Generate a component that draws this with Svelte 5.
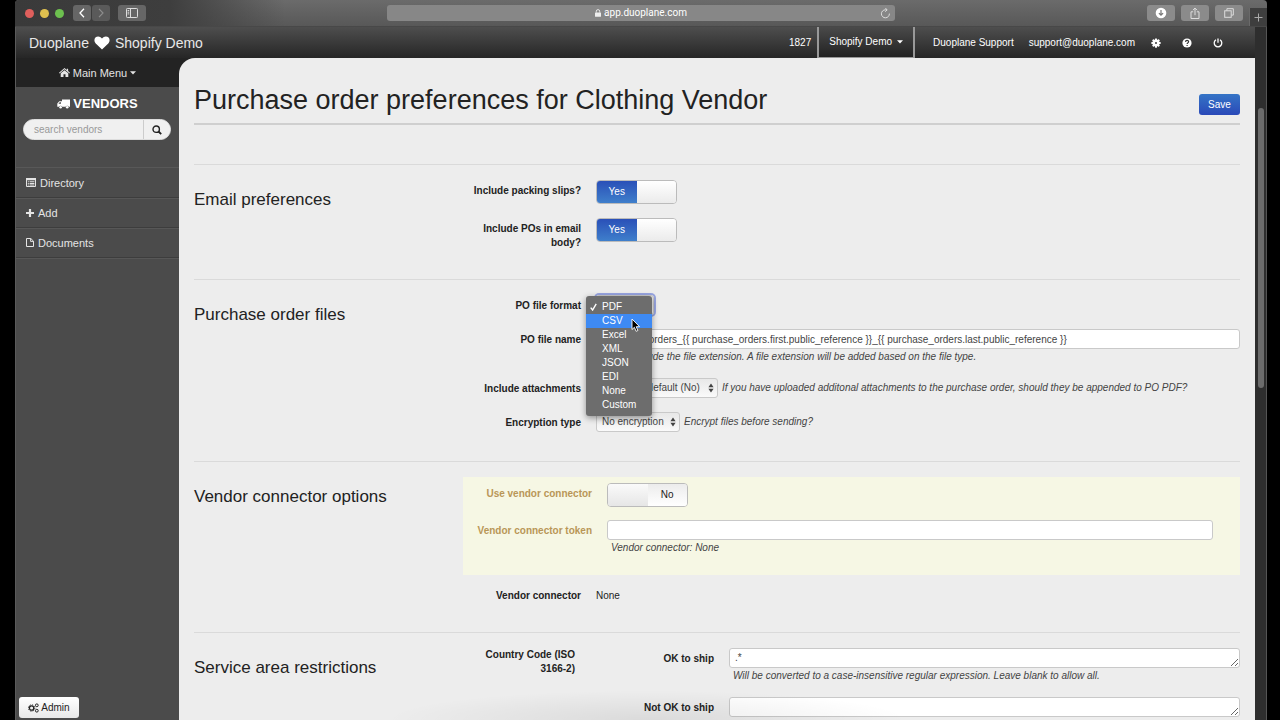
<script>
  let packing = $state(true);
  let poBody = $state(true);
  let connector = $state(false);
  let format = $state('PDF');
  let hovered = $state('CSV');
  let okToShip = $state('.*');
  const formats = ['PDF', 'CSV', 'Excel', 'XML', 'JSON', 'EDI', 'None', 'Custom'];
  const gearTeeth = [0, 45, 90, 135, 180, 225, 270, 315];
</script>

{#snippet gear(size, hole)}
  <svg width={size} height={size} viewBox="0 0 16 16" aria-hidden="true">
    <g fill="currentColor">
      {#each gearTeeth as a}
        <rect x="6.4" y="0.6" width="3.2" height="4" rx="0.6" transform="rotate({a} 8 8)" />
      {/each}
    </g>
    <circle cx="8" cy="8" r={(5.6 + hole) / 2} fill="none" stroke="currentColor" stroke-width={5.6 - hole} />
  </svg>
{/snippet}

{#snippet arrows()}
  <svg class="arrows" width="6" height="10" viewBox="0 0 6 10" aria-hidden="true">
    <path d="M3 0.6 5.6 4.2H0.4zM3 9.4 0.4 5.8H5.6z" fill="#444" />
  </svg>
{/snippet}

{#snippet caret()}
  <svg width="6" height="4" viewBox="0 0 6 4" aria-hidden="true"><path d="M0 0.3h6L3 3.6z" fill="currentColor" /></svg>
{/snippet}

<div class="window">
  <header class="toolbar">
    <div class="tools left">
      <span class="light red"></span><span class="light yellow"></span><span class="light green"></span>
      <button class="tool back" aria-label="Back"><svg width="8" height="12" viewBox="0 0 8 12"><path d="M6 1.8 2 6l4 4.2" fill="none" stroke="#fff" stroke-width="1.3" /></svg></button>
      <button class="tool forward" aria-label="Forward"><svg width="8" height="12" viewBox="0 0 8 12"><path d="M2 1.8 6 6l-4 4.2" fill="none" stroke="#8c8c8c" stroke-width="1.2" /></svg></button>
      <button class="tool panel" aria-label="Show sidebar"><svg width="12" height="10" viewBox="0 0 12 10" fill="none" stroke="#ddd"><rect x="0.5" y="0.5" width="11" height="9" rx="0.8" /><path d="M4.5 0.5v9M1.6 2.5h1.6M1.6 4.2h1.6M1.6 5.9h1.6" /></svg></button>
    </div>
    <div class="address">
      <svg width="6" height="8" viewBox="0 0 6 8" aria-hidden="true"><rect y="3.4" width="6" height="4.4" rx="0.5" fill="#eee" /><path d="M1.3 3.6V2.3a1.7 1.7 0 0 1 3.4 0v1.3" fill="none" stroke="#eee" stroke-width="0.9" /></svg>
      <span>app.duoplane.com</span>
      <button class="reload" aria-label="Reload"><svg width="11" height="11" viewBox="0 0 11 11" fill="none" stroke="#ddd"><path d="M9.4 5.6A4 4 0 1 1 5.4 1.8h1.4M5.2 0l2 1.8-2 1.9" /></svg></button>
    </div>
    <div class="tools right">
      <button class="tool" aria-label="Downloads"><svg width="12" height="12" viewBox="0 0 12 12"><circle cx="6" cy="6" r="5.3" fill="#fff" /><path d="M6 3v5M3.9 6.1 6 8.2l2.1-2.1" fill="none" stroke="#777" stroke-width="1.2" /></svg></button>
      <button class="tool" aria-label="Share"><svg width="10" height="13" viewBox="0 0 10 13" fill="none" stroke="#ddd"><path d="M3.2 4.8H1v6.7h8V4.8H6.8M5 8.2V1.2M2.9 3.2 5 1.1l2.1 2.1" /></svg></button>
      <button class="tool" aria-label="Tabs"><svg width="10" height="10" viewBox="0 0 10 10" fill="none" stroke="#ddd"><rect x="0.7" y="2.8" width="6.5" height="6.5" /><path d="M2.9 2.6V0.7h6.4v6.4H7.4" /></svg></button>
      <button class="newtab" aria-label="New tab"><svg width="9" height="9" viewBox="0 0 9 9"><path d="M4.5 0.5v8M0.5 4.5h8" stroke="#aaa" /></svg></button>
    </div>
  </header>

  <div class="viewport">
    <div class="page">
      <div class="topbar">
        <a class="brand" href="#home">
          Duoplane
          <svg width="16" height="14" viewBox="0 0 16 14" aria-hidden="true"><path d="M8 13.6 1.5 7.2C0 5.6.1 3 1.4 1.6 3.2-.1 6.2.1 8 2.6 9.8.1 12.8-.1 14.6 1.6 15.9 3 16 5.6 14.5 7.2z" fill="#fff" /></svg>
          Shopify Demo
        </a>
        <nav class="topnav">
          <span class="count">1827</span>
          <button class="account">Shopify Demo {@render caret()}</button>
          <div class="contact">
            <a href="#support">Duoplane Support</a>
            <a href="#mail">support@duoplane.com</a>
          </div>
          <div class="icons">
            <a href="#settings" aria-label="Settings">{@render gear(10, 1.6)}</a>
            <a href="#help" aria-label="Help"><svg width="10" height="10" viewBox="0 0 10 10"><circle cx="5" cy="5" r="4.6" fill="#fff" /><path d="M3.5 3.9C3.6 1.9 6.6 1.9 6.6 3.8 6.6 4.9 5.1 4.9 5.1 6.1M5.1 6.9v1.2" fill="none" stroke="#333" stroke-width="1.2" /></svg></a>
            <a href="#logout" aria-label="Log out"><svg width="10" height="10" viewBox="0 0 10 10" fill="none" stroke="#fff" stroke-width="1.3"><path d="M3 1.8a3.8 3.8 0 1 0 4 0M5 0.4v4.4" /></svg></a>
          </div>
        </nav>
      </div>

      <div class="body">
        <aside class="sidebar">
          <button class="mainmenu">
            <svg width="11" height="9" viewBox="0 0 11 9" aria-hidden="true"><path d="M5.5 0 7.8 2V.8h1.3v2.3L11 4.7l-.6.7L5.5 1.3.6 5.4 0 4.7z" fill="currentColor" /><path d="M5.5 2.2 9.3 5.3V9H6.5V6.2h-2V9H1.7V5.3z" fill="currentColor" /></svg>
            Main Menu {@render caret()}
          </button>
          <h2 class="vendors">
            <svg width="13" height="10" viewBox="0 0 13 10" aria-hidden="true"><path d="M5 .5h8v7.3h-1.2a1.7 1.7 0 0 0-3.2 0H5.2a1.7 1.7 0 0 0-3.2 0H.3V4.6L2.3 2.2H5zM1.4 4.7H4V3.2H2.7z" fill="#fff" fill-rule="evenodd" /><circle cx="3.6" cy="8.3" r="1.3" fill="#fff" /><circle cx="10.2" cy="8.3" r="1.3" fill="#fff" /></svg>
            VENDORS
          </h2>
          <form class="search">
            <input type="text" placeholder="search vendors" aria-label="Search vendors" />
            <button type="button" aria-label="Search"><svg width="10" height="10" viewBox="0 0 10 10" fill="none" stroke="#222"><circle cx="4.2" cy="4.2" r="3.2" stroke-width="1.4" /><path d="M6.5 6.5 9.2 9.2" stroke-width="1.8" /></svg></button>
          </form>
          <ul class="links">
            <li><a href="#directory"><svg width="10" height="9" viewBox="0 0 10 9" aria-hidden="true"><path d="M.5.5h9v8h-9z" fill="none" stroke="currentColor" /><path d="M0 0h10v2.3H0zM1.8 3.3h1v1h-1zM3.6 3.3h4.8v1H3.6zM1.8 5h1v1h-1zM3.6 5h4.8v1H3.6zM1.8 6.6h1v.8h-1zM3.6 6.6h4.8v.8H3.6z" fill="currentColor" /></svg>Directory</a></li>
            <li><a href="#add"><svg width="8" height="8" viewBox="0 0 8 8" aria-hidden="true"><path d="M2.9 0h2.2v2.9H8v2.2H5.1V8H2.9V5.1H0V2.9h2.9z" fill="currentColor" /></svg>Add</a></li>
            <li><a href="#documents"><svg width="8" height="9" viewBox="0 0 8 9" fill="none" stroke="currentColor" aria-hidden="true"><path d="M.5.5h4.3l2.7 2.7v5.3h-7zM4.6.5v2.9h2.9" /></svg>Documents</a></li>
          </ul>
          <button class="admin">
            <svg width="11" height="10" viewBox="0 0 11 10" fill="none" stroke="#222" aria-hidden="true"><circle cx="3.6" cy="5" r="2.2" stroke-width="1.3" /><circle cx="3.6" cy="5" r="3.2" stroke-width="0.9" stroke-dasharray="1.3 1.21" /><circle cx="8.8" cy="2.3" r="1.4" /><circle cx="8.8" cy="7.7" r="1.4" /></svg>
            Admin
          </button>
        </aside>

        <main>
          <div class="title">
            <h1>Purchase order preferences for Clothing Vendor</h1>
            <button class="save">Save</button>
          </div>

          <section>
            <h3>Email preferences</h3>
            <div class="fields">
              <div class="row">
                <label for="packing">Include packing slips?</label>
                <div class="control"><span class="switch" class:on={packing}><input id="packing" type="checkbox" bind:checked={packing} /><b>{packing ? 'Yes' : ''}</b><i>{packing ? '' : 'No'}</i></span></div>
              </div>
              <div class="row">
                <label for="pobody">Include POs in email body?</label>
                <div class="control"><span class="switch" class:on={poBody}><input id="pobody" type="checkbox" bind:checked={poBody} /><b>{poBody ? 'Yes' : ''}</b><i>{poBody ? '' : 'No'}</i></span></div>
              </div>
            </div>
          </section>

          <section>
            <h3>Purchase order files</h3>
            <div class="fields">
              <div class="row">
                <label for="format">PO file format</label>
                <div class="control inline">
                  <span class="select focus">
                    <select id="format" class="short" bind:value={format}>{#each formats as f}<option>{f}</option>{/each}</select>{@render arrows()}
                    <ul class="menu" role="listbox" aria-label="PO file format">
                      {#each formats as f}
                        <li role="option" aria-selected={f === format} class:hot={f === hovered} onmouseenter={() => (hovered = f)}>
                          <span class="tick">{#if f === format}<svg width="7" height="8" viewBox="0 0 7 8" aria-hidden="true"><path d="M.7 4.6 2.6 7 6.2.8" fill="none" stroke="#fff" stroke-width="1.4" /></svg>{/if}</span>{f}
                        </li>
                      {/each}
                    </ul>
                    <svg class="pointer" width="10" height="15" viewBox="0 0 10 15" aria-hidden="true"><path d="M1 1v10.5l2.4-2.2 1.7 4 1.8-.8-1.7-3.8H8.6z" fill="#000" stroke="#fff" stroke-width="0.9" /></svg>
                  </span>
                </div>
              </div>
              <div class="row">
                <label for="filename">PO file name</label>
                <div class="control">
                  <input id="filename" class="text" type="text" value={'purchase_orders_{{ purchase_orders.first.public_reference }}_{{ purchase_orders.last.public_reference }}'} />
                  <p class="help">Do not include the file extension. A file extension will be added based on the file type.</p>
                </div>
              </div>
              <div class="row">
                <label for="attach">Include attachments</label>
                <div class="control inline">
                  <span class="select"><select id="attach" class="long"><option>Company default (No)</option></select>{@render arrows()}</span>
                  <p class="help">If you have uploaded additonal attachments to the purchase order, should they be appended to PO PDF?</p>
                </div>
              </div>
              <div class="row">
                <label for="encrypt">Encryption type</label>
                <div class="control inline">
                  <span class="select"><select id="encrypt" class="medium"><option>No encryption</option></select>{@render arrows()}</span>
                  <p class="help">Encrypt files before sending?</p>
                </div>
              </div>
            </div>
          </section>

          <section>
            <h3>Vendor connector options</h3>
            <div class="fields">
              <div class="notice">
                <div class="row">
                  <label for="useconn">Use vendor connector</label>
                  <div class="control"><span class="switch" class:on={connector}><input id="useconn" type="checkbox" bind:checked={connector} /><b>{connector ? 'Yes' : ''}</b><i>{connector ? '' : 'No'}</i></span></div>
                </div>
                <div class="row">
                  <label for="token">Vendor connector token</label>
                  <div class="control">
                    <input id="token" class="text" type="text" />
                    <p class="help">Vendor connector: None</p>
                  </div>
                </div>
              </div>
              <div class="row plain">
                <span class="label">Vendor connector</span>
                <div class="control">None</div>
              </div>
            </div>
          </section>

          <section>
            <h3>Service area restrictions</h3>
            <div class="fields country">
              <span class="label">Country Code (ISO 3166-2)</span>
              <div class="rules">
                <div class="row">
                  <label for="ok">OK to ship</label>
                  <div class="control">
                    <textarea id="ok" class="text" rows="1" bind:value={okToShip}></textarea>
                    <p class="help">Will be converted to a case-insensitive regular expression. Leave blank to allow all.</p>
                  </div>
                </div>
                <div class="row">
                  <label for="notok">Not OK to ship</label>
                  <div class="control">
                    <textarea id="notok" class="text" rows="1"></textarea>
                    <p class="help">Will be converted to a case-insensitive regular expression. Leave blank to allow all.</p>
                  </div>
                </div>
              </div>
            </div>
          </section>
        </main>
      </div>
    </div>
    <div class="scrollbar"><div class="thumb"></div></div>
  </div>
</div>

<style>
  :global(body) { margin: 0; background: #000; }
  * { box-sizing: border-box; }
  .window {
    height: 100vh; margin: 0 13px 0 15px; display: flex; flex-direction: column; overflow: hidden;
    font: 10px/14px "Liberation Sans", Arial, sans-serif; color: #222;
    border-radius: 4px 4px 0 0;
  }
  button, input, select, textarea { font: inherit; color: inherit; margin: 0; }
  button { border: 0; padding: 0; background: none; display: inline-flex; align-items: center; justify-content: center; }
  a { color: inherit; text-decoration: none; }
  svg { display: block; flex: none; }
  ul { list-style: none; margin: 0; padding: 0; }
  h1, h2, h3, p { margin: 0; font-weight: 400; }

  .toolbar {
    flex: none; height: 27px; display: grid; grid-template-columns: 372fr 508fr 372fr; align-items: center;
    background: linear-gradient(90deg, #3a3a3a 0, #3e3e3e 155px, transparent 270px), linear-gradient(#6b6b6b, #585858);
    border-bottom: 1px solid #484848;
  }
  .tools { display: flex; align-items: center; height: 26px; }
  .left { padding-left: 10px; }
  .light { width: 9px; height: 9px; border-radius: 50%; margin-right: 6px; }
  .red { background: #df5f5c; }
  .yellow { background: #dfc04f; }
  .green { background: #6dc04f; }
  .tool { width: 28px; height: 16px; border-radius: 3px; background: #8b8b8b; }
  .left .tool { background: #666; }
  .left .back { width: 18px; margin: 0 1px 0 3px; }
  .left .forward { width: 18px; background: #5a5a5a; margin-right: 8px; }
  .address {
    height: 16px; border-radius: 3px; background: #878787; color: #fff; font-family: Roboto, sans-serif;
    display: flex; align-items: center; justify-content: center; gap: 3px; position: relative;
  }
  .reload { position: absolute; right: 4px; top: 3px; }
  .right { justify-content: flex-end; gap: 6px; }
  .newtab { width: 18px; height: 18px; align-self: flex-end; background: #3e3e3e; border-left: 1px solid #6a6a6a; }

  .viewport { flex: 1; min-height: 0; display: flex; }
  .page { flex: 1; min-width: 0; display: flex; flex-direction: column; background: #4b4b4b; border-left: 1px solid #5a5a5a; }
  .scrollbar { width: 12px; background: #2e2e2e; border-right: 1px solid #555; padding: 81px 2px 0 3px; }
  .thumb { height: 280px; border-radius: 4px; background: #6c6c6c; }

  .topbar {
    flex: none; height: 31px; padding-left: 13px; display: flex; justify-content: space-between; align-items: stretch;
    background: linear-gradient(#4e4e4e, #262626); color: #fff;
  }
  .brand { display: flex; align-items: center; gap: 5px; font-size: 14px; color: #e8e8e8; }
  .topnav { display: flex; align-items: center; padding-right: 32px; }
  .contact { display: flex; gap: 15px; margin-right: 16px; }
  .icons { display: flex; gap: 21px; }
  .count { margin-right: 6px; }
  .account {
    align-self: stretch; gap: 5px; padding: 0 10px; margin-right: 18px;
    border: solid #999; border-width: 0 2px 1px; background: linear-gradient(#4a4a4a, #222);
  }

  .body { flex: 1; min-height: 0; display: flex; background: linear-gradient(#232323 0 29px, #4b4b4b 29px); }
  .sidebar { flex: none; width: 163px; display: flex; flex-direction: column; color: #e4e4e4; font-size: 11px; }
  .mainmenu { height: 29px; gap: 3px; flex: none; }
  .vendors { display: flex; align-items: center; justify-content: center; gap: 3px; height: 32px; padding-top: 2px; font-size: 13px; font-weight: 700; color: #fff; }
  .search { display: flex; height: 21px; margin: 0 8px 27px 7px; border-radius: 11px; overflow: hidden; font-size: 10px; background: #eee; border: 1px solid #ddd; }
  .search input { flex: 1; min-width: 0; border: 0; padding: 0 0 0 10px; background: #f0f0f0; outline: none; }
  .search input::placeholder { color: #999; opacity: 1; }
  .search button { width: 27px; border-left: 1px solid #ccc; background: #f0f0f0; }
  .links { border-top: 1px solid #585858; }
  .links li { height: 30px; border-bottom: 1px solid #3d3d3d; box-shadow: 0 1px #575757; }
  .links a { height: 29px; display: flex; align-items: center; gap: 4px; padding-left: 10px; }
  .admin { width: 60px; height: 21px; margin: auto 0 2px 3px; gap: 2px; font-size: 10px; color: #222; border-radius: 3px; background: linear-gradient(#fff, #e8e8e8); flex: none; }

  main { position: relative; flex: 1; min-width: 0; overflow: hidden; padding: 0 15px; background: #ededed; border-top-left-radius: 16px; }
  main::after {
    content: ""; position: absolute; left: 19%; right: 32%; bottom: 0; height: 30px; pointer-events: none;
    background: radial-gradient(ellipse at 50% 100%, #00000014, transparent 70%);
  }
  .title { display: flex; justify-content: space-between; align-items: flex-start; padding-top: 24px; height: 67px; border-bottom: 2px solid #cfcfcf; margin-bottom: 39px; }
  h1 { font-size: 27px; line-height: 36px; }
  .save { width: 41px; height: 21px; margin-top: 12px; color: #fff; border-radius: 3px; background: linear-gradient(#3574c6, #2a49b8); }

  section { display: grid; grid-template-columns: 269px minmax(0, 1fr); border-top: 1px solid #dadada; padding: 15px 0 29px; }
  h3 { font-size: 17px; line-height: 24px; padding-top: 8px; }
  .fields { display: flex; flex-direction: column; gap: 14px; }
  .row { display: grid; grid-template-columns: 118px minmax(0, 1fr); column-gap: 15px; }
  label, .label { font-weight: 700; text-align: right; padding-top: 4px; }
  .control.inline { display: flex; align-items: center; gap: 4px; height: 20px; }
  .help { font-style: italic; color: #444; padding-left: 4px; margin-top: 1px; }
  .inline .help { padding-left: 0; margin-top: 0; }
  .text { display: block; width: 100%; height: 20px; border: 1px solid #c9c9c9; border-radius: 3px; background: #fff; padding: 2px 5px; outline: none; color: #444; }
  textarea.text { line-height: 14px; overflow: hidden; resize: vertical; }

  .switch { position: relative; display: flex; width: 81px; height: 24px; border: 1px solid #bbb; border-radius: 4px; overflow: hidden; background: linear-gradient(#f0f0f0, #fff); }
  .switch input { position: absolute; inset: 0; width: 100%; height: 100%; opacity: 0; }
  .switch b, .switch i { flex: 1; display: flex; align-items: center; justify-content: center; font-style: normal; font-weight: 400; }
  .switch b { background: linear-gradient(#fafafa, #e6e6e6); }
  .switch i { background: linear-gradient(#ececec, #fff); }
  .switch.on b { color: #fff; background: linear-gradient(#2a50b8, #3f7fcb); }
  .switch.on i { background: linear-gradient(#fff, #ebebeb); }

  .select { position: relative; display: block; }
  select { appearance: none; display: block; height: 20px; padding: 0 5px; border: 1px solid #c9c9c9; border-radius: 3px; background: linear-gradient(#e8e8e8, #fafafa); outline: none; color: #444; }
  .focus select { box-shadow: 0 0 0 2px #98a5e0; }
  .short { width: 58px; }
  .medium { width: 84px; }
  .long { width: 122px; }
  .arrows { position: absolute; right: 4px; top: 5px; pointer-events: none; }
  .menu { position: absolute; z-index: 2; left: -10px; top: 1px; width: 66px; padding: 4px 0; border-radius: 3px; background: #6d6d6d; color: #fff; box-shadow: 0 2px 6px #0006; }
  .menu li { display: flex; height: 14px; }
  .menu .hot { background: #3e8af3; }
  .tick { width: 16px; padding: 3px 0 0 4px; }
  .pointer { position: absolute; z-index: 3; left: 35px; top: 23px; }

  .notice { display: flex; flex-direction: column; gap: 13px; padding: 6px 27px 20px 11px; background: #f6f7e4; }
  .notice label { color: #b99657; }
  .plain .label { padding-top: 0; }
  .country { display: grid; grid-template-columns: 112px minmax(0, 1fr); gap: 0 21px; }
  .country > .label { padding-top: 0; }
  .rules { display: flex; flex-direction: column; gap: 14px; }
</style>
